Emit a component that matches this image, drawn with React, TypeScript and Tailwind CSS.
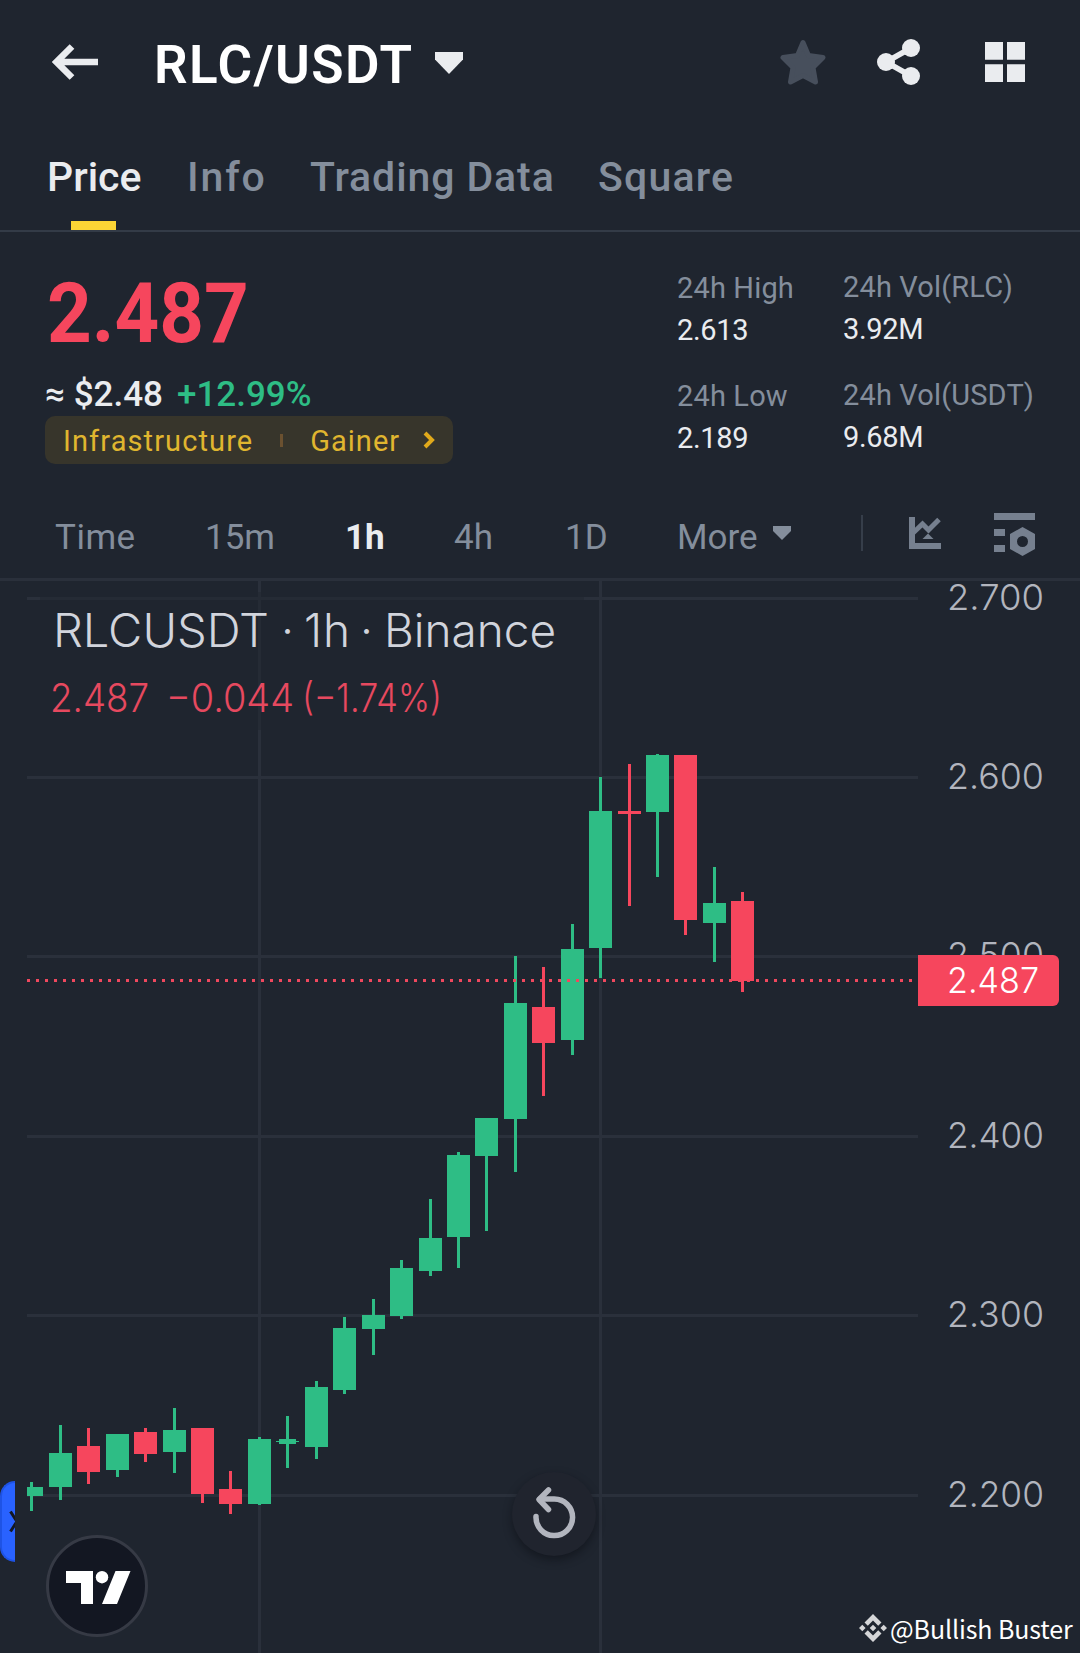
import { clsx } from "clsx"

type Candle = {
  x: number
  high: number
  top: number
  bottom: number
  low: number
  up: boolean
}

const UP = "#2ebd85"
const DOWN = "#f6465d"

const candles: Candle[] = [
  { x: 20, high: 1482, top: 1487, bottom: 1496, low: 1511, up: true },
  { x: 49, high: 1425, top: 1453, bottom: 1487, low: 1500, up: true },
  { x: 77, high: 1428, top: 1446, bottom: 1472, low: 1484, up: false },
  { x: 106, high: 1434, top: 1434, bottom: 1470, low: 1477, up: true },
  { x: 134, high: 1428, top: 1432, bottom: 1454, low: 1462, up: false },
  { x: 163, high: 1408, top: 1430, bottom: 1452, low: 1473, up: true },
  { x: 191, high: 1428, top: 1428, bottom: 1494, low: 1503, up: false },
  { x: 219, high: 1471, top: 1489, bottom: 1504, low: 1514, up: false },
  { x: 248, high: 1437, top: 1439, bottom: 1504, low: 1505, up: true },
  { x: 276, high: 1416, top: 1441, bottom: 1442, low: 1468, up: true },
  { x: 305, high: 1381, top: 1387, bottom: 1447, low: 1459, up: true },
  { x: 333, high: 1317, top: 1328, bottom: 1390, low: 1394, up: true },
  { x: 362, high: 1299, top: 1315, bottom: 1329, low: 1355, up: true },
  { x: 390, high: 1260, top: 1268, bottom: 1316, low: 1319, up: true },
  { x: 419, high: 1199, top: 1238, bottom: 1271, low: 1276, up: true },
  { x: 447, high: 1152, top: 1155, bottom: 1237, low: 1268, up: true },
  { x: 475, high: 1118, top: 1118, bottom: 1156, low: 1231, up: true },
  { x: 504, high: 956, top: 1003, bottom: 1119, low: 1172, up: true },
  { x: 532, high: 967, top: 1007, bottom: 1043, low: 1096, up: false },
  { x: 561, high: 924, top: 949, bottom: 1040, low: 1055, up: true },
  { x: 589, high: 777, top: 811, bottom: 948, low: 978, up: true },
  { x: 618, high: 764, top: 811, bottom: 814, low: 906, up: false },
  { x: 646, high: 754, top: 755, bottom: 812, low: 877, up: true },
  { x: 674, high: 755, top: 755, bottom: 920, low: 935, up: false },
  { x: 703, high: 867, top: 903, bottom: 923, low: 962, up: true },
  { x: 731, high: 892, top: 901, bottom: 981, low: 992, up: false },
]

const priceLines = [
  { label: "2.700", y: 598 },
  { label: "2.600", y: 777 },
  { label: "2.500", y: 956 },
  { label: "2.400", y: 1136 },
  { label: "2.300", y: 1315 },
  { label: "2.200", y: 1495 },
]

function Header() {
  return (
    <header className="flex h-[124px] items-center pl-[52px] pr-[55px]">
      <svg width="46" height="36" viewBox="0 0 46 36" fill="none" stroke="#eaecef" strokeWidth="6.6">
        <path d="M20 2.5 4.5 18 20 33.500M5 18h41" />
      </svg>
      <h1 className="ml-[56px] pt-[7px] text-[53px] font-semibold leading-none tracking-[1.4px] text-white">RLC/USDT</h1>
      <svg className="ml-[22px] mt-[2px]" width="28" height="22" viewBox="0 0 28 22" fill="#eaecef">
        <path d="M0 0h28v7.500L14 22 0 7.500z" />
      </svg>
      <div className="ml-auto flex items-center">
        <svg width="46" height="46" viewBox="0 0 46 46" fill="#474f5c" stroke="#474f5c" strokeWidth="5" strokeLinejoin="round">
          <path d="M23 3.500 28.500 16.500 43 18.500 33 28.500 35.500 43 23 36.500 10.500 43 13 28.500 3 18.500 17.500 16.500z" />
        </svg>
        <svg className="ml-[51px]" width="43" height="46" viewBox="0 0 43 46" fill="#eaecef">
          <path d="M34 9 9 23 34 37" fill="none" stroke="#eaecef" strokeWidth="5.500" />
          <circle cx="34" cy="9" r="9" />
          <circle cx="9" cy="23" r="9" />
          <circle cx="34" cy="37" r="9" />
        </svg>
        <svg className="ml-[65px]" width="40" height="40" viewBox="0 0 40 40" fill="#eaecef">
          <path d="M0 0h18v17.700H0zM22 0h18v17.700H22zM0 22.300h18V40H0zM22 22.300h18V40H22z" />
        </svg>
      </div>
    </header>
  )
}

function Tabs() {
  const tabs = [
    { name: "Price", style: "w-[140px] text-[#eaecef]" },
    { name: "Info", style: "w-[123px] tracking-[1.9px] text-[#848e9c]" },
    { name: "Trading Data", style: "w-[288px] tracking-[0.9px] text-[#848e9c]" },
    { name: "Square", style: "w-[150px] tracking-[1.2px] text-[#848e9c]" },
  ]

  return (
    <nav className="relative flex h-[108px] items-start border-b-2 border-[#333b47] pl-[47px] pt-[31px]">
      {tabs.map((tab) => (
        <button
          key={tab.name}
          type="button"
          className={clsx("whitespace-nowrap text-left text-[41px] font-medium leading-[44px]", tab.style)}
        >
          {tab.name}
        </button>
      ))}
      <div className="absolute bottom-0 left-[71px] h-[9px] w-[45px] bg-[#fcd535]" />
    </nav>
  )
}

function Stat({ label, value }: { label: string; value: string }) {
  return (
    <div className="whitespace-nowrap text-[29px] leading-[42px]">
      <p className="tracking-[0.15px] text-[#848e9c]">{label}</p>
      <p className="tracking-[-0.3px] text-[#eaecef]">{value}</p>
    </div>
  )
}

function Summary() {
  return (
    <section className="flex h-[264px]">
      <div className="w-[677px] pl-[45px] pt-[40px]">
        <p className="ml-[2px] w-fit origin-left scale-x-[0.94] text-[83px] font-bold leading-[84px] text-[#f6465d]">2.487</p>
        <p className="mt-[17px] flex gap-[14px] text-[35px] font-medium leading-[43px]">
          <span className="text-[#eaecef]">≈ $2.48</span>
          <span className="text-[#2ebd85]">+12.99%</span>
        </p>
        <div className="flex h-[48px] w-[408px] items-center rounded-[10px] bg-[#37352b] pl-[18px] pr-[18px] text-[29px] leading-none text-[#e0b62f]">
          <span className="pt-[2px] tracking-[1.1px]">Infrastructure</span>
          <span className="ml-[27px] h-[13px] w-[3px] bg-[#6b5130]" />
          <span className="ml-[27px] pt-[2px] tracking-[1px]">Gainer</span>
          <svg className="ml-auto" width="12" height="18" viewBox="0 0 12 18" fill="none" stroke="#e0a91b" strokeWidth="4">
            <path d="M2 2l7 7-7 7" />
          </svg>
        </div>
      </div>
      <div className="flex w-[166px] flex-col gap-6 pt-[35px]">
        <Stat label="24h High" value="2.613" />
        <Stat label="24h Low" value="2.189" />
      </div>
      <div className="flex flex-col gap-6 pt-[34px]">
        <Stat label="24h Vol(RLC)" value="3.92M" />
        <Stat label="24h Vol(USDT)" value="9.68M" />
      </div>
    </section>
  )
}

function Intervals() {
  return (
    <section className="flex h-[82px] items-center pl-[55px] text-[35px] leading-none text-[#848e9c]">
      <span className="w-[150px] tracking-[0.5px]">Time</span>
      <span className="w-[140px]">15m</span>
      <span className="w-[109px] font-bold text-[#eaecef]">1h</span>
      <span className="w-[111px]">4h</span>
      <span className="w-[112px]">1D</span>
      <span className="w-[96px]">More</span>
      <svg className="mb-2" width="18" height="14" viewBox="0 0 18 14" fill="#848e9c">
        <path d="M0 0h18v5L9 14 0 5z" />
      </svg>
      <span className="mb-2 ml-[70px] h-[36px] w-[2px] bg-[#363e4a]" />
      <svg className="mb-2 ml-[46px]" width="32" height="32" viewBox="0 0 32 32" fill="#76808f">
        <path d="M0 0h6v26h26v6H0z" />
        <path d="M4 16 13.500 7l6 6L30 2.500" fill="none" stroke="#76808f" strokeWidth="5" />
        <path d="M13.500 22 19 16.500l5.500 5.500z" />
      </svg>
      <svg className="mb-[6px] ml-[53px]" width="41" height="43" viewBox="0 0 41 43" fill="#76808f">
        <path d="M0 0h41v7H0zM0 16h11v7H0zM0 32h11v7H0z" />
        <path
          fillRule="evenodd"
          d="M28.500 14 41 21v15l-12.500 7L16 36V21zM28.500 23a5.500 5.500 0 1 0 0 11 5.500 5.500 0 0 0 0-11z"
        />
      </svg>
    </section>
  )
}

function PriceChart() {
  return (
    <svg width="1080" height="1075" viewBox="0 578 1080 1075" className="block overflow-visible font-['Inter',sans-serif]">
      <g fill="#2a303b">
        <rect x="0" y="578" width="1080" height="3" />
        {priceLines.map((line) => (
          <rect key={line.label} x="27" y={line.y - 1} width="891" height="3" />
        ))}
        <rect x="258" y="581" width="3" height="1072" />
        <rect x="599" y="581" width="3" height="1072" />
      </g>

      {/* legend */}
      <rect x="40" y="592" width="544" height="138" fill="#1f252f" opacity="0.5" />
      <g fontWeight="300">
        <g fontSize="46" fill="#d1d4dc">
          <text x="53" y="647" textLength="216" lengthAdjust="spacingAndGlyphs">
            RLCUSDT
          </text>
          <text x="281" y="647">·</text>
          <text x="304" y="647" textLength="46">
            1h
          </text>
          <text x="360" y="647">·</text>
          <text x="384" y="647" textLength="172" lengthAdjust="spacingAndGlyphs">
            Binance
          </text>
        </g>
        <g fontSize="39" fill="#e6495f">
          <text x="50" y="712" textLength="99" lengthAdjust="spacingAndGlyphs">
            2.487
          </text>
          <text x="166" y="712" textLength="128" lengthAdjust="spacingAndGlyphs">
            −0.044
          </text>
          <text x="302" y="712" textLength="140" lengthAdjust="spacingAndGlyphs">
            (−1.74%)
          </text>
        </g>
      </g>

      {candles.map((c) => (
        <g key={c.x} fill={c.up ? UP : DOWN}>
          <rect x={c.x + 10} y={c.high} width="3" height={c.low - c.high} />
          <rect
            x={Math.max(c.x, 27)}
            y={c.top}
            width={c.x + 23 - Math.max(c.x, 27)}
            height={c.bottom - c.top}
          />
        </g>
      ))}
      <rect x="279" y="1439" width="17" height="5" fill={UP} />

      {/* price scale */}
      <g fontSize="36" fontWeight="300" fill="#b2b5be">
        {priceLines.map((line) => (
          <text key={line.label} x="947" y={line.y + 12} textLength="97" lengthAdjust="spacingAndGlyphs">
            {line.label}
          </text>
        ))}
      </g>
      <path d="M27 980.500H918" stroke="#f0485e" strokeWidth="3" strokeDasharray="3 6" />
      <path d="M918 955h135a6 6 0 0 1 6 6v39a6 6 0 0 1-6 6H918z" fill={DOWN} />
      <text x="947" y="993" fontSize="36" fontWeight="300" fill="#fff" textLength="92" lengthAdjust="spacingAndGlyphs">
        2.487
      </text>
    </svg>
  )
}

export default function App() {
  return (
    <main className="relative h-[1653px] w-[1080px] overflow-hidden bg-[#1f252f] font-['Roboto',sans-serif]">
      <Header />
      <Tabs />
      <Summary />
      <Intervals />
      <PriceChart />

      <button type="button" className="absolute left-0 top-[1481px] h-[81px] w-[15px] overflow-hidden rounded-l-[15px] border-y-2 border-l-2 border-[#1e53e5] bg-[#2962ff]">
        <svg className="absolute left-[7px] top-[27px]" width="14" height="23" viewBox="0 0 14 23" fill="none" stroke="#131722" strokeWidth="3">
          <path d="M1.500 1.500 8 11.500l-6.500 10" />
        </svg>
      </button>

      <div className="absolute left-[46px] top-[1535px] flex h-[102px] w-[102px] items-center justify-center rounded-full border-[3px] border-[#363a45] bg-[#131722]">
        <svg className="ml-[2px] mt-[3px]" width="65" height="33" viewBox="0 0 65 33" fill="#fff">
          <path d="M0 0h27v33H15V12H0zM49.500 0h15L51 33H36z" />
          <circle cx="36" cy="6.200" r="6.200" />
        </svg>
      </div>

      <button type="button" className="absolute left-[512px] top-[1472px] h-[84px] w-[84px] rounded-full bg-[#20242e] shadow-[0_4px_8px_rgba(10,12,18,0.5)]">
        <svg width="84" height="84" viewBox="0 0 84 84" fill="none" stroke="#b2b5be" strokeWidth="5.500" strokeLinecap="round" strokeLinejoin="round">
          <path d="M24 44.500a18.300 18.300 0 1 0 18.300-17.500H28" />
          <path d="M36.500 18 27 27.500l9.500 10" />
        </svg>
      </button>

      <div className="absolute bottom-[9px] left-[859px] flex items-center gap-[3px]">
        <svg className="mb-[2px]" width="28" height="28" viewBox="0 0 28 28" fill="#d5d6d8">
          <path d="M14 0l8.500 8.500-3.300 3.300L14 6.600l-5.200 5.200-3.300-3.300zM14 28l-8.500-8.500 3.300-3.300 5.200 5.200 5.200-5.200 3.300 3.300zM14 10.700l3.300 3.300-3.300 3.300-3.300-3.300zM3.300 10.700 6.600 14l-3.300 3.300L0 14zM24.700 10.700 28 14l-3.300 3.300-3.300-3.300z" />
        </svg>
        <span className="mb-[2px] whitespace-nowrap font-['Noto_Sans_CJK_SC',sans-serif] text-[25px] leading-[28px] tracking-[-0.1px] text-white">
          @Bullish Buster
        </span>
      </div>
    </main>
  )
}
